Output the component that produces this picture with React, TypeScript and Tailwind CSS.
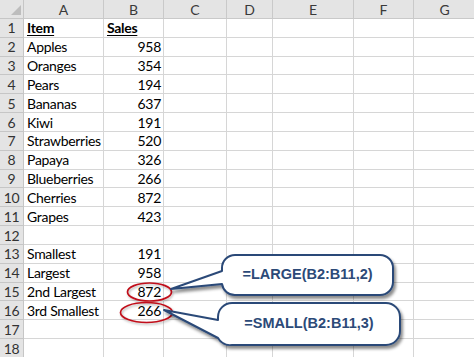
const cols = ["A", "B", "C", "D", "E", "F", "G"];

const data: [string, string][] = [
	["Item", "Sales"],
	["Apples", "958"],
	["Oranges", "354"],
	["Pears", "194"],
	["Bananas", "637"],
	["Kiwi", "191"],
	["Strawberries", "520"],
	["Papaya", "326"],
	["Blueberries", "266"],
	["Cherries", "872"],
	["Grapes", "423"],
	["", ""],
	["Smallest", "191"],
	["Largest", "958"],
	["2nd Largest", "872"],
	["3rd Smallest", "266"],
	["", ""],
	["", ""],
];

function Callouts() {
	return (
		<svg className="absolute inset-0" width="474" height="357" viewBox="0 0 474 357">
			<defs>
				<filter id="sh" x="-20%" y="-20%" width="140%" height="160%">
					<feDropShadow dx="2" dy="3" stdDeviation="1.6" floodColor="#000" floodOpacity="0.45" />
				</filter>
				<filter id="sh2" x="-20%" y="-20%" width="140%" height="160%">
					<feDropShadow dx="1" dy="1.5" stdDeviation="1" floodColor="#000" floodOpacity="0.3" />
				</filter>
			</defs>
			<ellipse cx="149.5" cy="292" rx="22" ry="9" fill="none" stroke="#c0101a" strokeWidth="1.7" filter="url(#sh2)" />
			<ellipse cx="146.5" cy="312.5" rx="26" ry="10" fill="none" stroke="#c0101a" strokeWidth="1.7" filter="url(#sh2)" />
			<path
				d="M 235 255 H 380 A 13 13 0 0 1 393 268 V 282 A 13 13 0 0 1 380 295 H 235 A 13 13 0 0 1 222 284 L 171 289 L 222 271 V 268 A 13 13 0 0 1 235 255 Z"
				fill="#fff"
				stroke="#2c4a78"
				strokeWidth="2"
				strokeLinejoin="round"
				filter="url(#sh)"
			/>
			<path
				d="M 232 303 H 386 A 14 14 0 0 1 400 317 V 331 A 14 14 0 0 1 386 345 H 232 A 14 14 0 0 1 218 338 L 164 310 L 218 320 V 317 A 14 14 0 0 1 232 303 Z"
				fill="#fff"
				stroke="#2c4a78"
				strokeWidth="2"
				strokeLinejoin="round"
				filter="url(#sh)"
			/>
		</svg>
	);
}

export default function App() {
	return (
		<div className="relative w-[474px] h-[357px] overflow-hidden bg-white font-['Lato',sans-serif]">
			<div className="grid grid-cols-[24px_80px_60px_63px_46px_81px_60px_62px] grid-rows-[19px_repeat(18,18.83px)]">
				<div className="relative bg-[#e4e4e4] border-r border-b border-[#c6c6c6]">
					<div className="absolute right-[2px] bottom-[3px] w-0 h-0 border-l-[10px] border-l-transparent border-b-[10px] border-b-[#bdbdbd]" />
				</div>
				{cols.map((c) => (
					<div
						key={c}
						className="flex items-center justify-center bg-[#e4e4e4] border-r border-b border-[#c9c9c9] text-[14px] text-[#3a3a3a]"
					>
						{c}
					</div>
				))}
				{data.map(([item, sales], i) => (
					<>
						<div
							key={`n${i}`}
							className="flex items-center justify-center bg-[#e4e4e4] border-r border-b border-[#c6c6c6] text-[14px] text-[#333] tracking-[-0.3px]"
						>
							{i + 1}
						</div>
						<div
							key={`a${i}`}
							className={`flex items-center pl-[3px] border-r border-b border-[#d6d6d6] text-[14px] text-black tracking-[-0.3px] whitespace-nowrap ${i === 0 ? "font-bold underline underline-offset-2" : ""}`}
						>
							{item}
						</div>
						<div
							key={`b${i}`}
							className={
								i === 0
									? "flex items-center pl-[3px] border-r border-b border-[#d6d6d6] text-[14px] text-black tracking-[-0.3px] font-bold underline underline-offset-2"
									: "flex items-center justify-end pr-[2px] border-r border-b border-[#d6d6d6] text-[14px] text-black tracking-[-0.3px]"
							}
						>
							{sales}
						</div>
						{cols.slice(2).map((c) => (
							<div key={`${c}${i}`} className="border-r border-b border-[#d6d6d6]" />
						))}
					</>
				))}
			</div>
			<Callouts />
			<div className="absolute left-[222px] top-[255px] w-[171px] h-[40px] flex items-center justify-center font-['Liberation_Sans',sans-serif] font-bold text-[14.5px] text-[#2c4a78]">
				=LARGE(B2:B11,2)
			</div>
			<div className="absolute left-[218px] top-[303px] w-[182px] h-[42px] flex items-center justify-center font-['Liberation_Sans',sans-serif] font-bold text-[14.5px] text-[#2c4a78]">
				=SMALL(B2:B11,3)
			</div>
		</div>
	);
}
